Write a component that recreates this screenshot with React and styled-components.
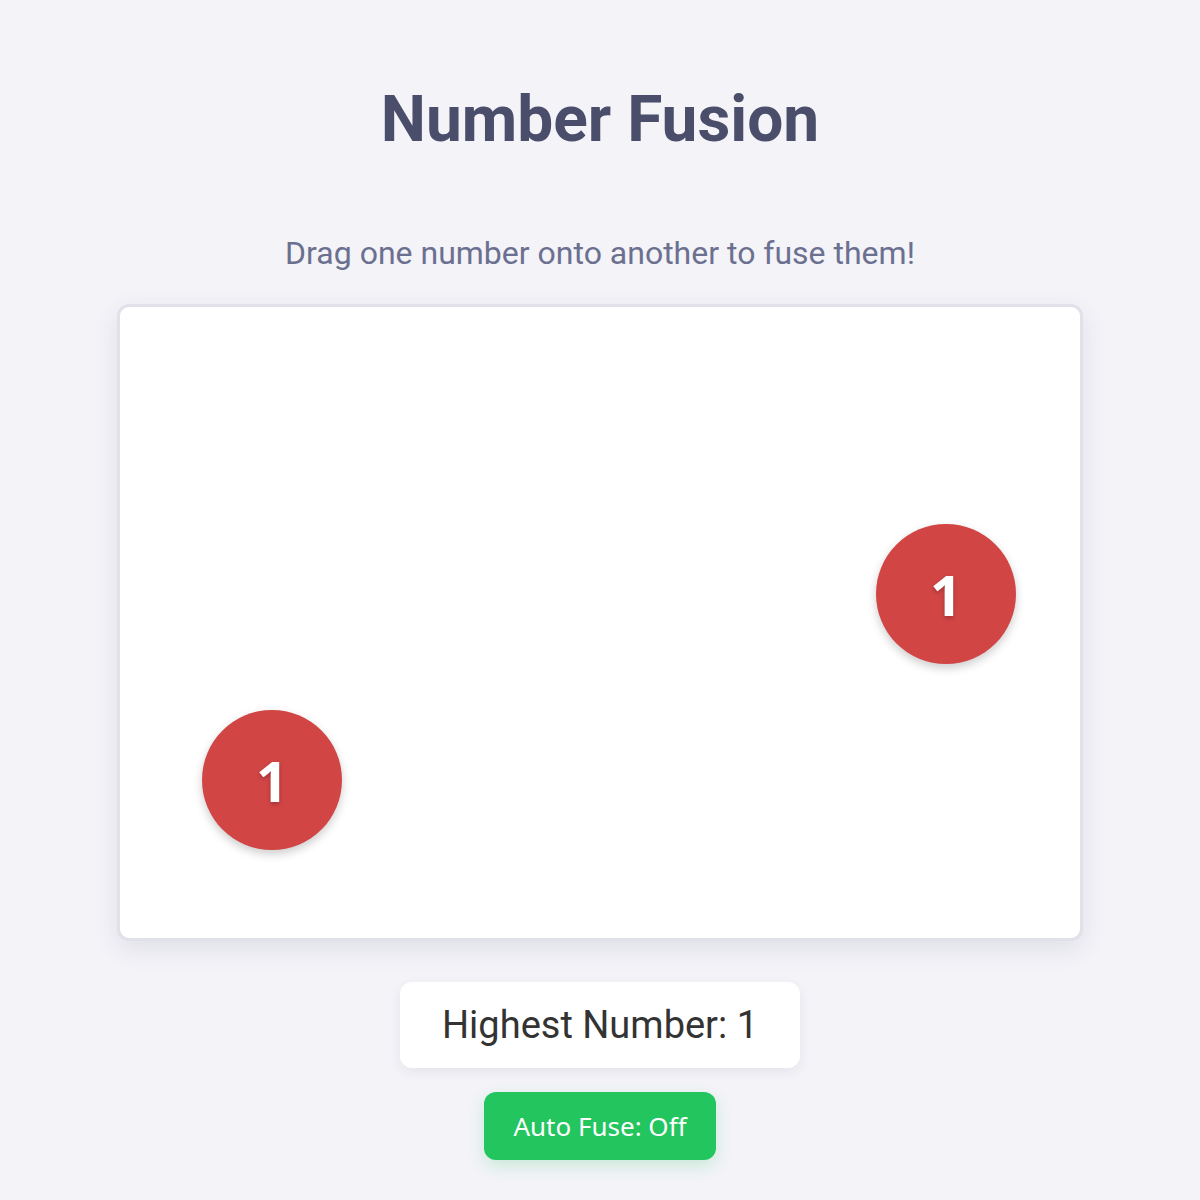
import styled, { createGlobalStyle } from "styled-components";

const GlobalStyle = createGlobalStyle`
  body {
    margin: 0;
    background: #f3f3f8;
    font-family: Roboto, "Liberation Sans", sans-serif;
  }
`;

const tiles = [
  { id: 1, value: 1, x: 826, y: 287 },
  { id: 2, value: 1, x: 152, y: 473 },
];

const App = () => {
  return (
    <>
      <GlobalStyle />
      <StPage>
        <StTitle>Number Fusion</StTitle>
        <StHint>Drag one number onto another to fuse them!</StHint>
        <StBoard>
          {tiles.map((t) => (
            <StTile key={t.id} style={{ left: t.x, top: t.y }}>
              {t.value}
            </StTile>
          ))}
        </StBoard>
        <StScore>Highest Number: 1</StScore>
        <StButton>Auto Fuse: Off</StButton>
      </StPage>
    </>
  );
};

export default App;

const StPage = styled.div`
  display: flex;
  flex-direction: column;
  align-items: center;
  padding-top: 80px;
  min-height: 1200px;
  box-sizing: border-box;
`;

const StTitle = styled.h1`
  margin: 0;
  font-size: 64px;
  font-weight: 700;
  color: #4a4e6b;
  line-height: 80px;
`;

const StHint = styled.p`
  margin: 73px 0 0;
  font-size: 32px;
  color: #6c7090;
  line-height: 40px;
`;

const StBoard = styled.div`
  position: relative;
  width: 960px;
  height: 631px;
  margin-top: 31px;
  background: #fff;
  border: 3px solid #e1e1ea;
  border-radius: 12px;
  box-shadow: 0 8px 24px rgba(60, 60, 90, 0.1);
`;

const StTile = styled.div`
  position: absolute;
  width: 140px;
  height: 140px;
  margin: -70px 0 0 -70px;
  border-radius: 50%;
  background: #d24545;
  color: #fff;
  display: flex;
  align-items: center;
  justify-content: center;
  font-family: "Open Sans", "Noto Sans", sans-serif;
  font-weight: 700;
  font-size: 56px;
  text-shadow: 0 2px 4px rgba(0, 0, 0, 0.25);
  box-shadow: 0 4px 10px rgba(0, 0, 0, 0.2);
`;

const StScore = styled.div`
  margin-top: 41px;
  width: 400px;
  height: 86px;
  display: flex;
  align-items: center;
  justify-content: center;
  background: #fff;
  border-radius: 12px;
  box-shadow: 0 4px 12px rgba(60, 60, 90, 0.08);
  font-size: 38px;
  color: #333;
`;

const StButton = styled.button`
  margin-top: 24px;
  width: 232px;
  height: 68px;
  border: none;
  border-radius: 12px;
  background: #22c55e;
  color: #fff;
  font-family: "Noto Sans", "Open Sans", sans-serif;
  font-size: 26px;
  box-shadow: 0 6px 16px rgba(34, 197, 94, 0.2);
  cursor: pointer;
`;
